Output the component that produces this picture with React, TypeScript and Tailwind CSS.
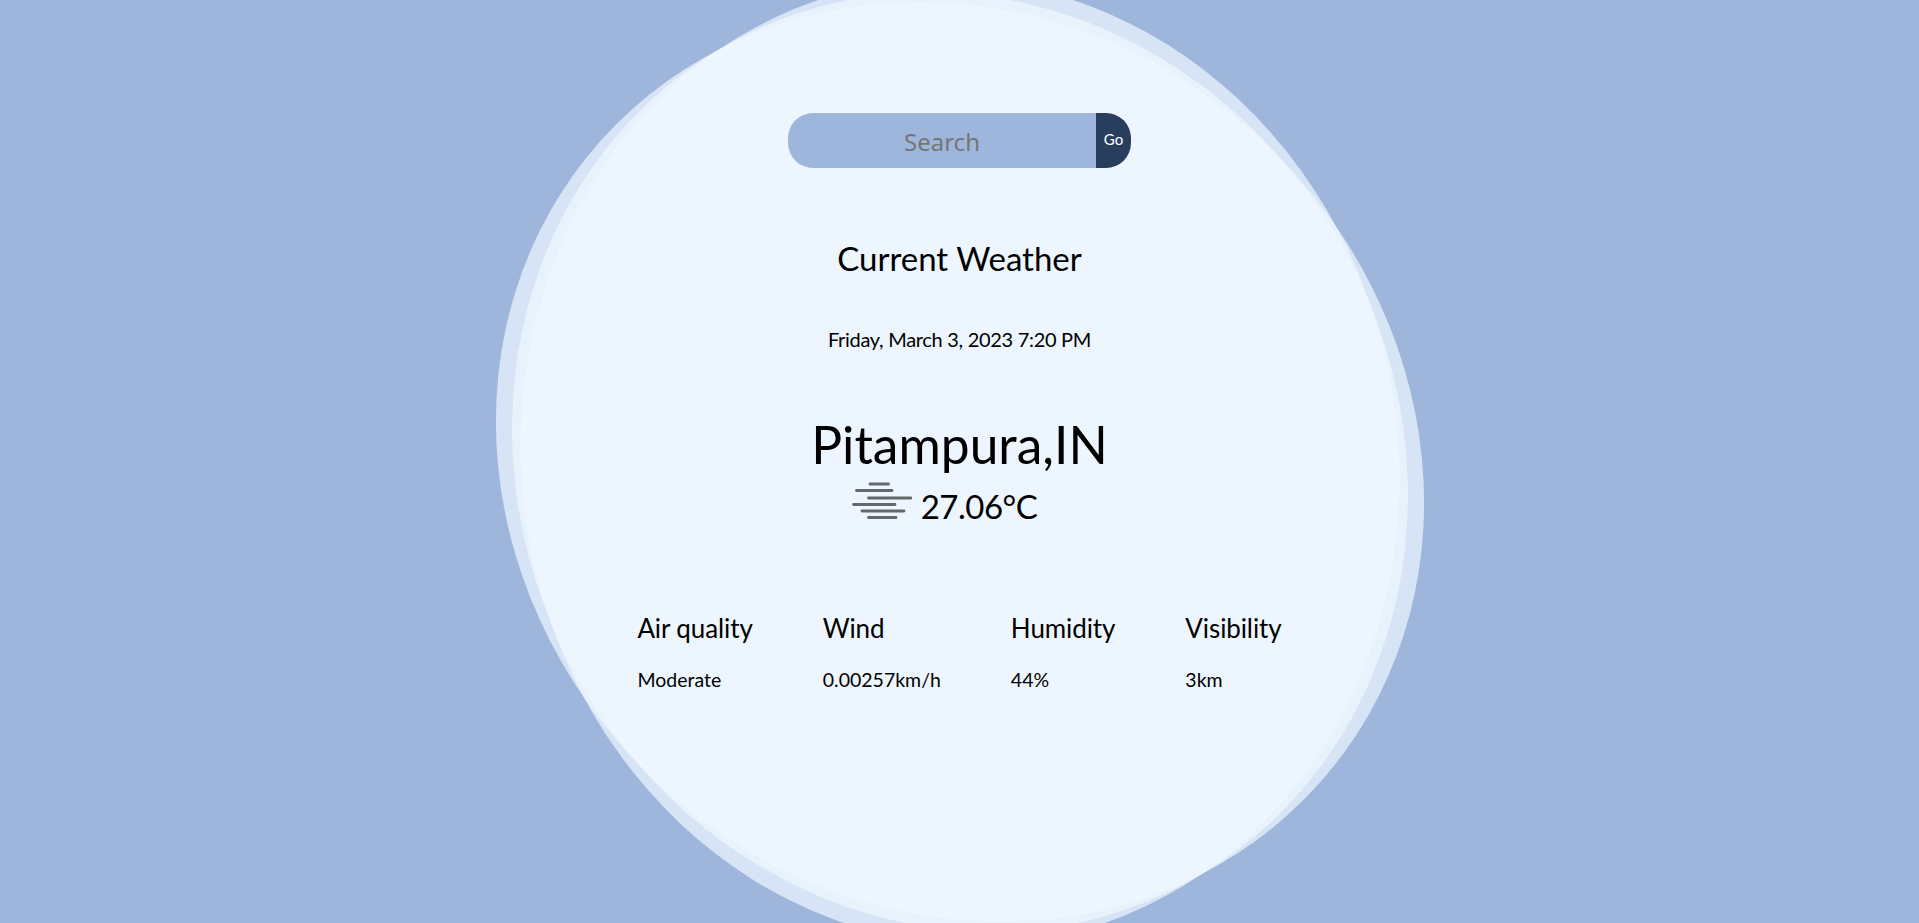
import { useState } from "react";

const stats = [
  { label: "Air quality", value: "Moderate" },
  { label: "Wind", value: "0.00257km/h" },
  { label: "Humidity", value: "44%" },
  { label: "Visibility", value: "3km" },
];

function MistIcon() {
  return (
    <svg width="60" height="38" viewBox="0 0 60 38" className="mb-[10px] shrink-0" stroke="#62686c" strokeWidth="2.8" strokeLinecap="round">
      <line x1="18" y1="2" x2="36.5" y2="2" />
      <line x1="4.5" y1="8.5" x2="40" y2="8.5" />
      <line x1="16.5" y1="16" x2="59" y2="16" />
      <line x1="1.5" y1="22.5" x2="43" y2="22.5" />
      <line x1="10" y1="29" x2="52" y2="29" />
      <line x1="16.5" y1="35.5" x2="44" y2="35.5" />
    </svg>
  );
}

export default function App() {
  const [query, setQuery] = useState("");

  return (
    <div className="relative h-screen overflow-hidden bg-[#9fb6dc] [font-family:Lato,sans-serif] text-black">
      {/* three see-through blobs, same centre */}
      <div className="absolute left-[478px] top-[20.5px] h-[882px] w-[964px] rotate-[42deg] rounded-[50%] bg-[#f0f8ff] opacity-70" />
      <div className="absolute left-[476px] top-[23.5px] h-[876px] w-[968px] rotate-[80deg] rounded-[50%] bg-[#f0f8ff] opacity-70" />
      <div className="absolute left-[482px] top-[22.5px] h-[878px] w-[956px] rotate-[62deg] rounded-[50%] bg-[#f0f8ff] opacity-70" />

      <div className="relative flex flex-col items-center pt-[113px]">
        <form className="flex h-[55px] w-[343px]" onSubmit={(e) => e.preventDefault()}>
          <input
            value={query}
            onChange={(e) => setQuery(e.target.value)}
            placeholder="Search"
            className="h-full w-[308px] rounded-l-[25px] bg-[#9fb6dc] pt-[2px] text-center text-[24px] [font-family:'Noto_Sans',sans-serif] outline-none placeholder:text-[#757575]"
          />
          <button className="h-full w-[35px] rounded-r-[25px] bg-[#293d5c] pb-[2px] text-[15px] text-white">Go</button>
        </form>

        <h1 className="mt-[65px] text-[33px] leading-[50px]">Current Weather</h1>
        <p className="mt-[41px] text-[20px] leading-[30px] tracking-[-0.3px]">Friday, March 3, 2023 7:20 PM</p>

        <h2 className="mt-[55px] text-[51.5px] leading-[70px]">Pitampura,IN</h2>
        <div className="mt-[2px] mr-[30px] flex items-center gap-[9px]">
          <MistIcon />
          <span className="text-[33px] leading-[50px] tracking-[-0.5px]">27.06°C</span>
        </div>

        <div className="mt-[80px] flex gap-[70px]">
          {stats.map((s) => (
            <div key={s.label} className="flex flex-col gap-[20px]">
              <span className="text-[26px] leading-[34px] tracking-[-0.1px]">{s.label}</span>
              <span className="text-[19.5px] leading-[30px]">{s.value}</span>
            </div>
          ))}
        </div>
      </div>
    </div>
  );
}
